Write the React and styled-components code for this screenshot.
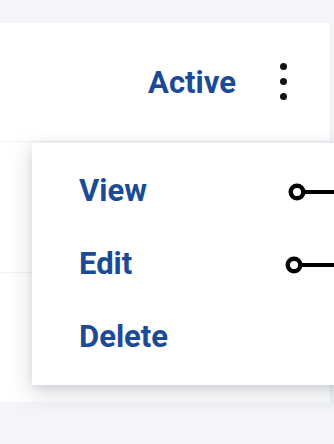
import styled, { createGlobalStyle } from 'styled-components';

const GlobalStyle = createGlobalStyle`
  html, body {
    margin: 0;
    padding: 0;
    background: #f3f5f9;
    font-family: Roboto, "Liberation Sans", Arial, sans-serif;
  }
`;

const menuItems = [
  { label: 'View', pin: 297 },
  { label: 'Edit', pin: 294 },
  { label: 'Delete', pin: null },
];

function App() {
  return (
    <>
      <GlobalStyle />
      <Page>
        <Table>
          <Row height={119}>
            <Status>Active</Status>
            <Kebab>
              <Dot />
              <Dot />
              <Dot />
            </Kebab>
          </Row>
          <Row height={131} />
          <Row height={129} last />
        </Table>

        <Menu>
          {menuItems.map(item => (
            <MenuItem key={item.label}>
              {item.label}
              {item.pin && (
                <Pin style={{ left: item.pin - 32 - 9 }} width="60" height="18" viewBox="0 0 60 18">
                  <circle cx="9" cy="9" r="6.3" fill="#fff" stroke="#000" strokeWidth="4.4" />
                  <line x1="15" y1="9" x2="60" y2="9" stroke="#000" strokeWidth="3.8" />
                </Pin>
              )}
            </MenuItem>
          ))}
        </Menu>
      </Page>
    </>
  );
}

export default App;

const Page = styled.div`
  position: relative;
  width: 334px;
  height: 444px;
  overflow: hidden;
  padding-top: 23px;
  box-sizing: border-box;
`;

const Table = styled.div`
  width: 330px;
  background: #fff;
  border-right: 1px solid #eceef2;
  display: flex;
  flex-direction: column;
`;

const Row = styled.div`
  height: ${props => props.height}px;
  display: flex;
  align-items: center;
  justify-content: flex-end;
  padding-right: 43px;
  border-bottom: ${props => (props.last ? 'none' : '1px solid #eef0f3')};
  box-sizing: border-box;
`;

const Status = styled.span`
  font-size: 31px;
  font-weight: 700;
  color: #1b4b97;
  margin-right: 44px;
`;

const Kebab = styled.div`
  display: flex;
  flex-direction: column;
  gap: 8px;
  margin-top: -1px;
`;

const Dot = styled.span`
  width: 7px;
  height: 7px;
  border-radius: 50%;
  background: #111;
`;

const Menu = styled.div`
  position: absolute;
  left: 32px;
  top: 143px;
  width: 320px;
  height: 242px;
  padding: 11px 0 12px;
  box-sizing: border-box;
  background: #fff;
  box-shadow: 0 8px 22px rgba(30, 40, 60, 0.18), 0 2px 8px rgba(30, 40, 60, 0.08);
  display: flex;
  flex-direction: column;
`;

const MenuItem = styled.div`
  position: relative;
  height: 73px;
  display: flex;
  align-items: center;
  padding-left: 47px;
  font-size: 31px;
  font-weight: 700;
  color: #1b4b97;
`;

const Pin = styled.svg`
  position: absolute;
  top: 50%;
  margin-top: -8px;
`;
